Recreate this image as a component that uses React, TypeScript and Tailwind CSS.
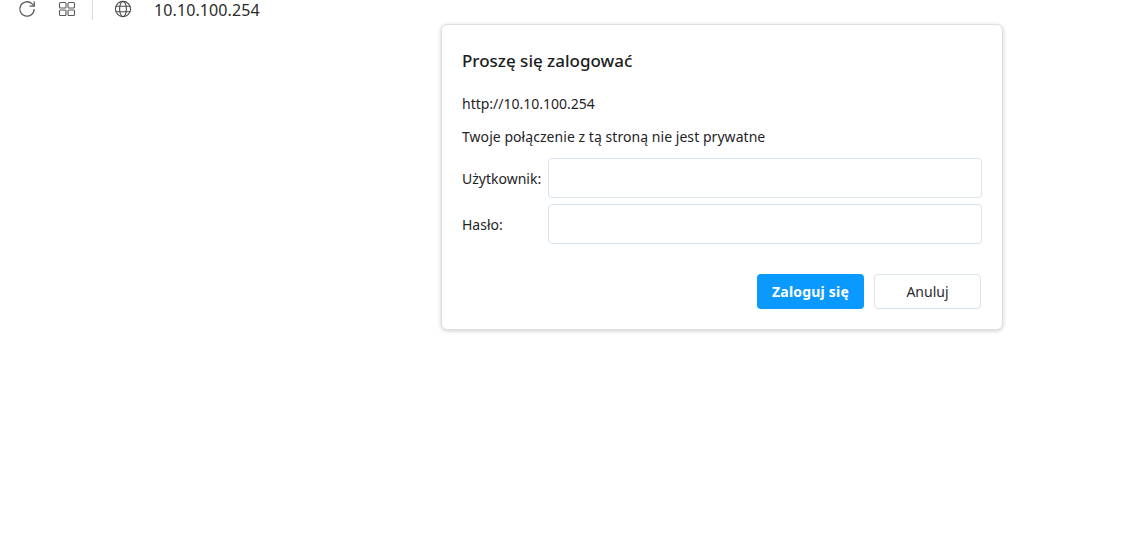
export default function App() {
  return (
    <div className="h-[542px] w-full overflow-hidden bg-white font-['Noto_Sans',sans-serif] text-[#1f2328]">
      {/* Browser toolbar, cut off at the top */}
      <div className="flex h-[20px] items-center pl-[18px]">
        <svg className="h-[18px] w-[18px] -translate-y-[1px] text-[#5a5a5a]" viewBox="0 0 18 18" fill="none" stroke="currentColor" strokeWidth={1.3}>
          <path d="M16.2 9a7.2 7.2 0 1 1-2.1-5.1l2 2" />
          <path d="M16.3 1.4v4.8h-4.8" />
        </svg>
        <svg className="ml-[22px] h-[18px] w-[18px] -translate-y-[1px] text-[#5a5a5a]" viewBox="0 0 18 18" fill="none" stroke="currentColor" strokeWidth={1.1}>
          <rect x="1.5" y="2.5" width="6.5" height="5.5" rx="1" />
          <rect x="10" y="2.5" width="6.5" height="5.5" rx="1" />
          <rect x="1.5" y="10" width="6.5" height="5.5" rx="1" />
          <rect x="10" y="10" width="6.5" height="5.5" rx="1" />
        </svg>
        <div className="ml-[16px] h-[20px] w-px bg-[#dcdcdc]" />
        <svg className="ml-[21px] h-[18px] w-[18px] -translate-y-[1px] text-[#4a4a4a]" viewBox="0 0 18 18" fill="none" stroke="currentColor" strokeWidth={1.1}>
          <circle cx="9" cy="9" r="7.6" />
          <ellipse cx="9" cy="9" rx="3.4" ry="7.6" />
          <path d="M2 6.3h14M2 11.7h14" />
        </svg>
        <span className="ml-[22px] text-[16px] leading-[20px] tracking-[0.1px] text-[#2b2b2b]">10.10.100.254</span>
      </div>

      {/* Login dialog */}
      <div className="ml-[441px] mt-[4px] flex h-[306px] w-[562px] flex-col rounded-[6px] border border-[#dcdfe3] bg-white pl-[20px] pr-[20px] shadow-[0_1px_4px_rgba(0,0,0,0.2)]">
        <h1 className="mt-[24px] text-[17px] leading-[24px] font-medium text-[#1a1d21]">Proszę się zalogować</h1>
        <p className="mt-[21px] text-[14px] leading-[20px]">http://10.10.100.254</p>
        <p className="mt-[13px] text-[14px] leading-[20px] tracking-[0.05px]">Twoje połączenie z tą stroną nie jest prywatne</p>
        <div className="mt-[11px] flex items-center">
          <label className="w-[86px] text-[14px]">Użytkownik:</label>
          <input className="h-[40px] w-[434px] rounded-[4px] border border-[#d8e2ec] bg-white outline-none" />
        </div>
        <div className="mt-[6px] flex items-center">
          <label className="w-[86px] text-[14px]">Hasło:</label>
          <input type="password" className="h-[40px] w-[434px] rounded-[4px] border border-[#d8e2ec] bg-white outline-none" />
        </div>
        <div className="mt-[30px] flex w-[520px] justify-end gap-[10px] pr-[1px]">
          <button className="h-[35px] w-[107px] rounded-[4px] bg-[#0a99ff] text-[14px] font-bold tracking-[0.2px] text-white">Zaloguj się</button>
          <button className="h-[35px] w-[107px] rounded-[4px] border border-[#d8e2ec] bg-white text-[14px] text-[#2b2b2b]">Anuluj</button>
        </div>
      </div>
    </div>
  );
}
